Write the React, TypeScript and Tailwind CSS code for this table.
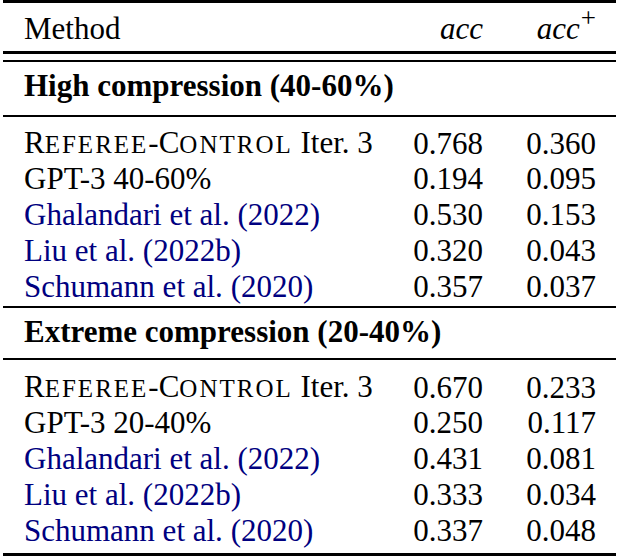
import React from "react";

type Row = { name: React.ReactNode; a: string; b: string };

const Cite = ({ pre, year }: { pre: string; year: string }) => (
  <span className="text-[#000080]">
    {pre} ({year})
  </span>
);

const Sc = ({ children }: { children: React.ReactNode }) => (
  <span className="text-[25px] tracking-[2px] uppercase">{children}</span>
);

const Ref = () => (
  <span>
    R<Sc>eferee</Sc>-C<Sc>ontrol</Sc> Iter. 3
  </span>
);

const high: Row[] = [
  { name: <Ref />, a: "0.768", b: "0.360" },
  { name: "GPT-3 40-60%", a: "0.194", b: "0.095" },
  { name: <Cite pre="Ghalandari et al." year="2022" />, a: "0.530", b: "0.153" },
  { name: <Cite pre="Liu et al." year="2022b" />, a: "0.320", b: "0.043" },
  { name: <Cite pre="Schumann et al." year="2020" />, a: "0.357", b: "0.037" },
];

const extreme: Row[] = [
  { name: <Ref />, a: "0.670", b: "0.233" },
  { name: "GPT-3 20-40%", a: "0.250", b: "0.117" },
  { name: <Cite pre="Ghalandari et al." year="2022" />, a: "0.431", b: "0.081" },
  { name: <Cite pre="Liu et al." year="2022b" />, a: "0.333", b: "0.034" },
  { name: <Cite pre="Schumann et al." year="2020" />, a: "0.337", b: "0.048" },
];

const RowLine = ({ r }: { r: Row }) => (
  <div className="grid grid-cols-[1fr_100px_113px] pl-[21px] pr-[20px] h-[36px] items-center">
    <div className="whitespace-nowrap">{r.name}</div>
    <div className="text-right">{r.a}</div>
    <div className="text-right">{r.b}</div>
  </div>
);

export default function App() {
  return (
    <div className="w-[620px] h-[557px] bg-white text-black font-['Liberation_Serif',serif] text-[31px] leading-[36px]">
      <div className="ml-[3px] w-[613px]">
        <div className="h-[3px] bg-black" />
        <div className="pt-[8px] pb-[4px]">
          <div className="grid grid-cols-[1fr_100px_113px] pl-[21px] pr-[20px] h-[36px] items-center">
            <div>Method</div>
            <div className="text-right italic">acc</div>
            <div className="text-right whitespace-nowrap">
              <span className="italic">acc</span>
              <span className="text-[27px] leading-none relative -top-[12px] ml-[1px]">+</span>
            </div>
          </div>
        </div>
        <div className="h-[3px] bg-black" />
        <div className="h-[6px]" />
        <div className="h-[2px] bg-black" />
        <div className="pt-[6px] pb-[11px] pl-[21px] font-bold h-[53px] box-border whitespace-nowrap">
          High compression (40-60%)
        </div>
        <div className="h-[2px] bg-black" />
        <div className="pt-[8px] pb-[1px]">
          {high.map((r, i) => (
            <RowLine key={i} r={r} />
          ))}
        </div>
        <div className="h-[2px] bg-black" />
        <div className="pt-[6px] pb-[8px] pl-[21px] font-bold h-[50px] box-border whitespace-nowrap">
          Extreme compression (20-40%)
        </div>
        <div className="h-[2px] bg-black" />
        <div className="pt-[9px] pb-[4px]">
          {extreme.map((r, i) => (
            <RowLine key={i} r={r} />
          ))}
        </div>
        <div className="h-[3px] bg-black" />
      </div>
    </div>
  );
}
